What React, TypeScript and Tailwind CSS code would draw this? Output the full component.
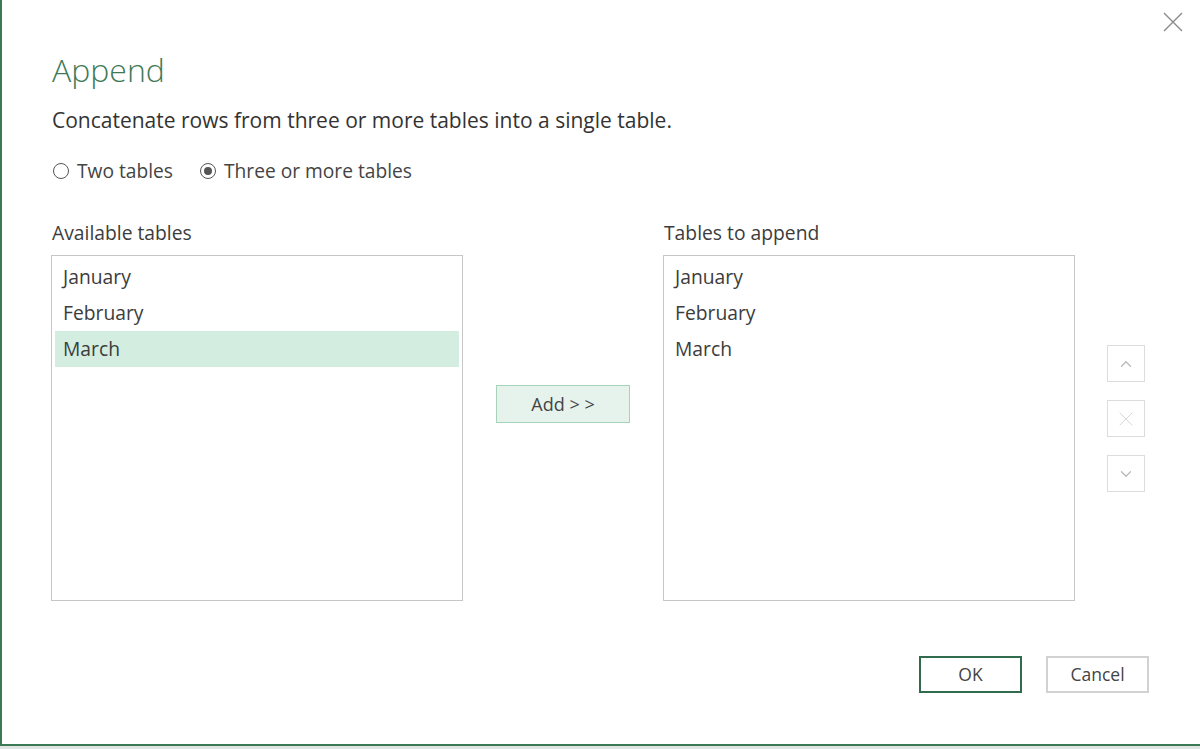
import { ChevronUp, ChevronDown } from "lucide-react"

const font = "font-['Open_Sans','Noto_Sans',sans-serif]"

const months = ["January", "February", "March"]

function Cross({ size, className }: { size: number; className?: string }) {
  return (
    <svg width={size} height={size} viewBox="0 0 20 20" className={className} fill="none" stroke="currentColor" strokeWidth={1.4}>
      <path d="M1 1L19 19M19 1L1 19" />
    </svg>
  )
}

function Radio({ checked, label }: { checked?: boolean; label: string }) {
  return (
    <label className="flex items-center gap-[8px]">
      <span className="flex h-[16px] w-[16px] items-center justify-center rounded-full border border-[#555] bg-white">
        {checked && <span className="h-[8px] w-[8px] rounded-full bg-[#555]" />}
      </span>
      <span>{label}</span>
    </label>
  )
}

function ListBox({ selected }: { selected?: string }) {
  return (
    <div className="h-[346px] w-[412px] border border-[#c6c6c6] bg-white px-[3px] pt-[3px]">
      {months.map(m => (
        <div
          key={m}
          className={`h-[36px] pl-[8px] leading-[36px] ${m === selected ? "bg-[#d3eee0]" : ""}`}
        >
          {m}
        </div>
      ))}
    </div>
  )
}

function SideButton({ children }: { children: React.ReactNode }) {
  return (
    <button className="flex h-[37px] w-[38px] items-center justify-center border border-[#dcdcdc] bg-white text-[#b8b8b8]">
      {children}
    </button>
  )
}

export default function App() {
  return (
    <div className={`flex h-[749px] w-[1200px] flex-col bg-[#dfe6e1] ${font} text-[#333]`}>
      <div className="relative flex flex-1 flex-col border-b-2 border-l-2 border-[#3b7a55] bg-white pl-[49px]">
        <button className="absolute right-[17px] top-[12px] text-[#8a8a8a]">
          <Cross size={20} />
        </button>

        <h1 className="ml-[1px] mt-[48px] text-[32px] font-light leading-[44px] text-[#3f7a57]">Append</h1>

        <p className="ml-[1px] mt-[15px] text-[21px] leading-[26px] text-[#333]">
          Concatenate rows from three or more tables into a single table.
        </p>

        <div className="ml-[2px] mt-[25px] flex items-center gap-[27px] text-[19.2px] leading-[26px] text-[#444]">
          <Radio label="Two tables" />
          <Radio checked label="Three or more tables" />
        </div>

        <div className="mt-[37px] flex text-[19.3px] text-[#3c3c3c]">
          <div className="flex flex-col">
            <div className="pb-[10px] pl-[1px] leading-[24px]">Available tables</div>
            <ListBox selected="March" />
          </div>

          <div className="ml-[33px] flex w-[134px] flex-col pt-[164px]">
            <button className="h-[38px] w-[134px] border border-[#a6d3b9] bg-[#e6f3ec] text-[18px] text-[#444]">
              Add &gt; &gt;
            </button>
          </div>

          <div className="ml-[33px] flex flex-col">
            <div className="pb-[10px] pl-[1px] leading-[24px]">Tables to append</div>
            <ListBox />
          </div>

          <div className="ml-[32px] flex flex-col gap-[18px] pt-[124px]">
            <SideButton>
              <ChevronUp className="h-[18px] w-[18px]" strokeWidth={1.6} />
            </SideButton>
            <SideButton>
              <Cross size={14} className="text-[#d6d6d6]" />
            </SideButton>
            <SideButton>
              <ChevronDown className="h-[18px] w-[18px]" strokeWidth={1.6} />
            </SideButton>
          </div>
        </div>

        <div className="mt-[55px] flex justify-end gap-[24px] pr-[51px] text-[17.5px]">
          <button className="h-[37px] w-[103px] border-2 border-[#2f6b4c] bg-white text-[#444]">OK</button>
          <button className="h-[37px] w-[103px] border-2 border-[#d2d2d2] bg-white text-[#444]">Cancel</button>
        </div>
      </div>
      <div className="h-[3px]" />
    </div>
  )
}
